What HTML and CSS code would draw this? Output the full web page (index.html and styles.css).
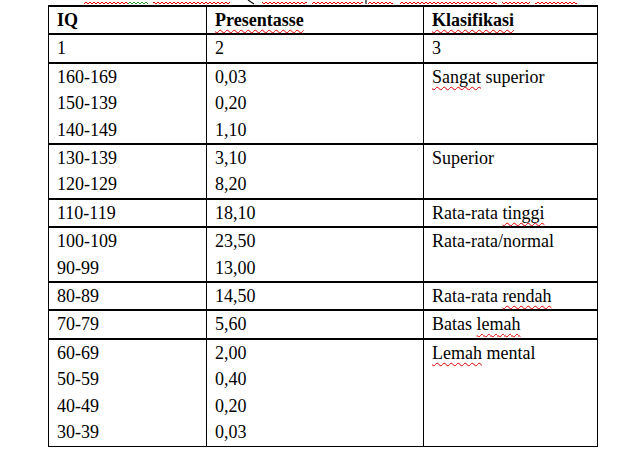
FILE: index.html
```html
<!DOCTYPE html>
<html>
<head>
<meta charset="utf-8">
<link rel="stylesheet" href="styles.css">
</head>
<body>
<div class="strip">
  <svg width="623" height="5" viewBox="0 0 623 5">
    <defs>
      <pattern id="wr" width="4" height="5" patternUnits="userSpaceOnUse">
        <polyline points="0,4 2,2 4,4" fill="none" stroke="#e00000" stroke-width="1"/>
      </pattern>
      <pattern id="wg" width="4" height="5" patternUnits="userSpaceOnUse">
        <polyline points="0,4 2,2 4,4" fill="none" stroke="#2a9a2a" stroke-width="1"/>
      </pattern>
    </defs>
    <rect x="84" y="1" width="44" height="4" fill="url(#wr)"/>
    <rect x="128" y="1" width="20" height="4" fill="url(#wg)"/>
    <rect x="153" y="1" width="77" height="4" fill="url(#wr)"/>
    <rect x="262" y="1" width="45" height="4" fill="url(#wr)"/>
    <rect x="312" y="1" width="51" height="4" fill="url(#wr)"/>
    <rect x="368" y="1" width="25" height="4" fill="url(#wr)"/>
    <rect x="400" y="1" width="97" height="4" fill="url(#wr)"/>
    <rect x="502" y="1" width="28" height="4" fill="url(#wr)"/>
    <rect x="535" y="1" width="42" height="4" fill="url(#wr)"/>
    <path d="M248 0 L254 4" stroke="#111" stroke-width="1.2"/>
    <path d="M366 0 L366 4" stroke="#111" stroke-width="1.2"/>
  </svg>
</div>
<table class="iq">
  <colgroup>
    <col class="c1"><col class="c2"><col class="c3">
  </colgroup>
  <tr class="head">
    <td>IQ</td>
    <td><span class="sp">Presentasse</span></td>
    <td><span class="sp">Klasifikasi</span></td>
  </tr>
  <tr>
    <td>1</td><td>2</td><td>3</td>
  </tr>
  <tr>
    <td>160-169<br>150-139<br>140-149</td>
    <td>0,03<br>0,20<br>1,10</td>
    <td><span class="sp">Sangat</span> superior</td>
  </tr>
  <tr>
    <td>130-139<br>120-129</td>
    <td>3,10<br>8,20</td>
    <td>Superior</td>
  </tr>
  <tr>
    <td>110-119</td>
    <td>18,10</td>
    <td>Rata-rata <span class="sp">tinggi</span></td>
  </tr>
  <tr>
    <td>100-109<br>90-99</td>
    <td>23,50<br>13,00</td>
    <td>Rata-rata/normal</td>
  </tr>
  <tr>
    <td>80-89</td>
    <td>14,50</td>
    <td>Rata-rata <span class="sp">rendah</span></td>
  </tr>
  <tr>
    <td>70-79</td>
    <td>5,60</td>
    <td>Batas <span class="sp">lemah</span></td>
  </tr>
  <tr class="last">
    <td>60-69<br>50-59<br>40-49<br>30-39</td>
    <td>2,00<br>0,40<br>0,20<br>0,03</td>
    <td><span class="sp">Lemah</span> mental</td>
  </tr>
</table>
</body>
</html>
```

FILE: styles.css
```css
html, body {
  margin: 0;
  padding: 0;
  background: #ffffff;
}

body {
  font-family: "Liberation Serif", "Times New Roman", serif;
  font-size: 18px;
  color: #000000;
}

.strip {
  height: 5px;
  overflow: hidden;
}

.strip svg {
  display: block;
}

.iq {
  margin-left: 48px;
  border-collapse: separate;
  border-spacing: 0;
  table-layout: fixed;
  width: 549px;
  border-top: 2px solid #000;
  border-left: 1px solid #000;
}

.c1 { width: 158px; }
.c2 { width: 217px; }
.c3 { width: 174px; }

.iq td {
  box-sizing: border-box;
  padding: 0 4px 0 8px;
  line-height: 26.4px;
  vertical-align: top;
  border-right: 1px solid #000;
  border-bottom: 2px solid #000;
  white-space: nowrap;
}

.iq tr.last td {
  border-bottom: 1px solid #000;
}

.head td {
  font-weight: bold;
}

.sp {
  text-decoration: underline wavy #e00000;
  text-decoration-thickness: 1px;
  text-underline-offset: 3px;
  text-decoration-skip-ink: none;
}
```
